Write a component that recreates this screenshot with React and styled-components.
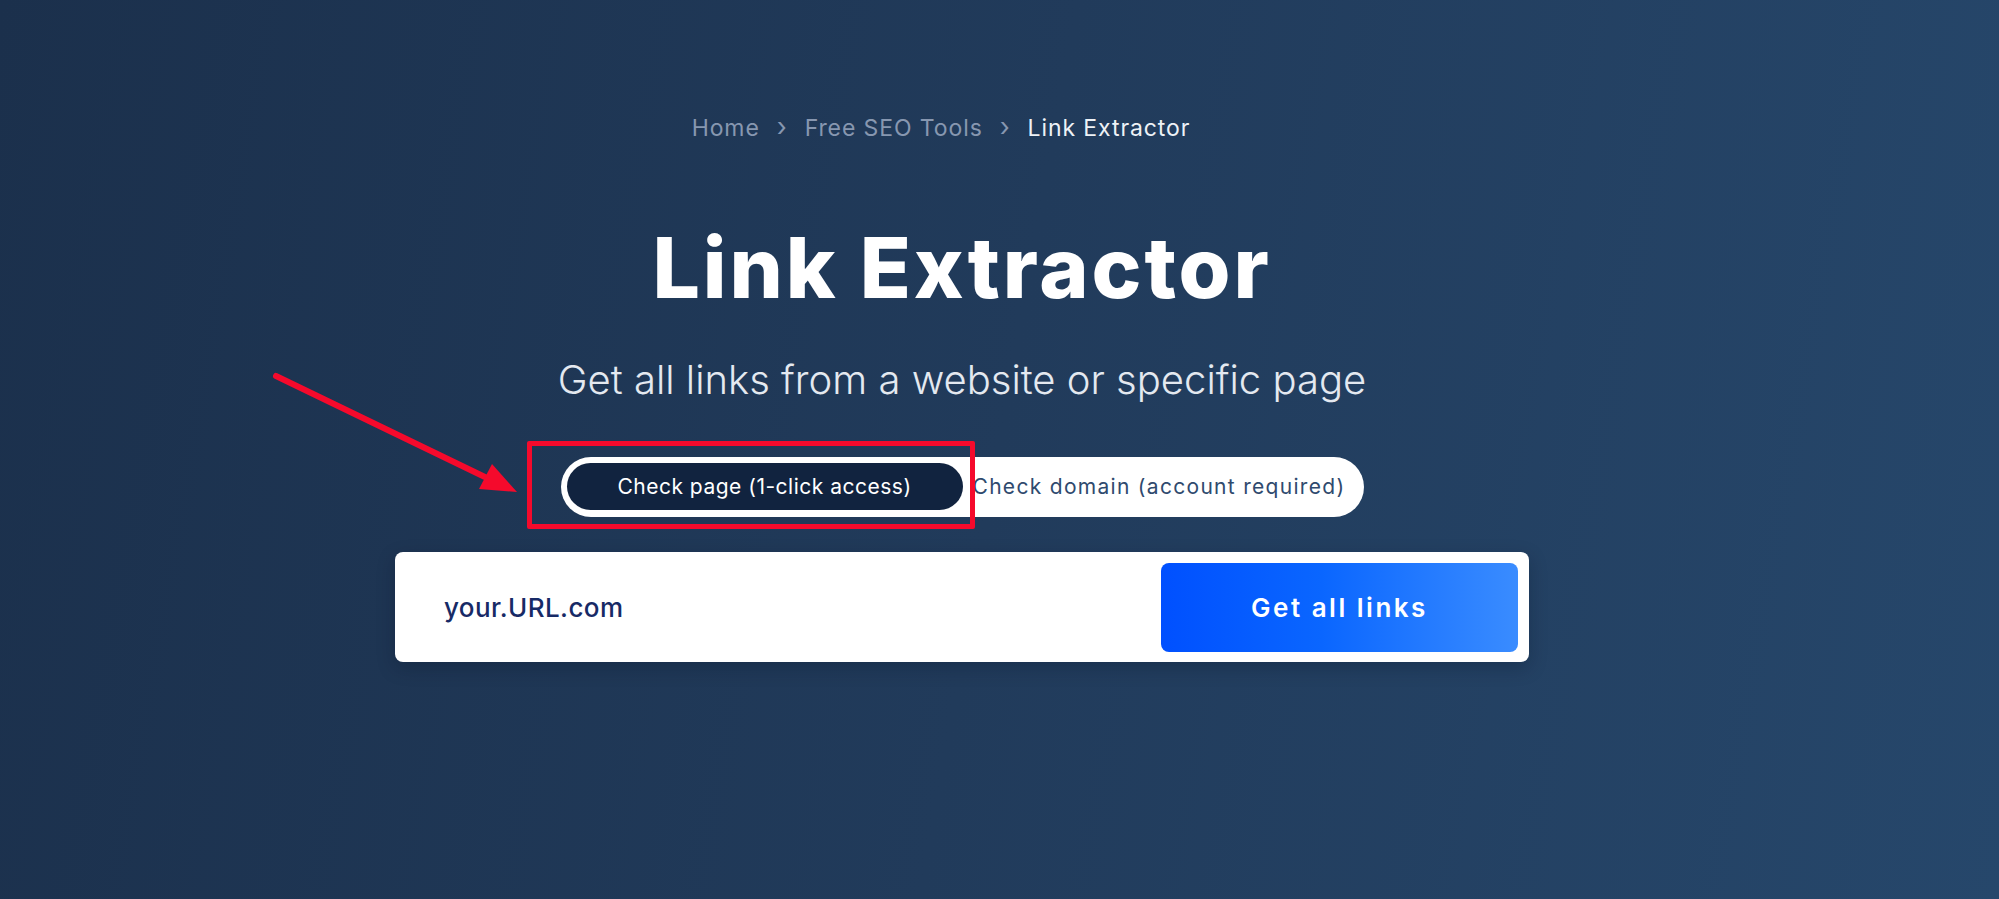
import React from 'react';
import styled, { createGlobalStyle } from 'styled-components';

const GlobalStyle = createGlobalStyle`
  html, body {
    margin: 0;
    padding: 0;
  }
  body {
    font-family: Inter, 'Noto Sans', sans-serif;
  }
`;

export default function App() {
  return (
    <>
      <GlobalStyle />
      <Page>
        <Content>
          <Breadcrumbs>
            <Crumb>Home</Crumb>
            <Chevron>›</Chevron>
            <Crumb>Free SEO Tools</Crumb>
            <Chevron>›</Chevron>
            <Crumb $current>Link Extractor</Crumb>
          </Breadcrumbs>

          <Title>Link Extractor</Title>
          <Subtitle>Get all links from a website or specific page</Subtitle>

          <ToggleWrap>
            <Arrow width='270' height='150' viewBox='0 0 270 150'>
              <line
                x1='15'
                y1='19'
                x2='226'
                y2='121'
                stroke='#f50a2c'
                strokeWidth='6'
                strokeLinecap='round'
              />
              <polygon points='256,135 218,132 231,107' fill='#f50a2c' />
            </Arrow>
            <Highlight />
            <Toggle>
              <ToggleOption type='button' $active>
                Check page (1-click access)
              </ToggleOption>
              <ToggleOption type='button'>
                Check domain (account required)
              </ToggleOption>
            </Toggle>
          </ToggleWrap>

          <SearchCard>
            <UrlInput placeholder='your.URL.com' />
            <SubmitButton type='button'>Get all links</SubmitButton>
          </SearchCard>
        </Content>
      </Page>
    </>
  );
}

const Page = styled.div`
  min-height: 899px;
  box-sizing: border-box;
  padding: 113px 75px 0 0;
  background: linear-gradient(100deg, #1b304c 0%, #213b5b 50%, #26476b 100%);
`;

const Content = styled.div`
  display: flex;
  flex-direction: column;
  align-items: center;
`;

const Breadcrumbs = styled.nav`
  display: flex;
  align-items: center;
  gap: 17px;
  height: 30px;
  margin-right: 42px;
  font-size: 23px;
  font-weight: 400;
  letter-spacing: 0.9px;
`;

const Crumb = styled.span`
  color: ${(p) => (p.$current ? '#eef2f7' : '#8797b0')};
`;

const Chevron = styled.span`
  color: #8797b0;
  font-size: 26px;
  line-height: 30px;
  margin-top: -3px;
`;

const Title = styled.h1`
  margin: 83px 0 0;
  font-size: 84px;
  line-height: 1;
  font-weight: 800;
  color: #ffffff;
  letter-spacing: 2.9px;
`;

const Subtitle = styled.p`
  margin: 50px 0 0;
  font-size: 40px;
  line-height: 1;
  font-weight: 300;
  color: #e4e9f0;
`;

const ToggleWrap = styled.div`
  position: relative;
  margin-top: 57px;
`;

const Toggle = styled.div`
  display: flex;
  align-items: center;
  width: 803px;
  height: 60px;
  box-sizing: border-box;
  padding: 6px 18px 7px 6px;
  background: #ffffff;
  border-radius: 30px;
`;

const ToggleOption = styled.button`
  height: 47px;
  border: none;
  border-radius: 24px;
  font-family: Inter, 'Noto Sans', sans-serif;
  font-size: 21px;
  cursor: pointer;
  white-space: nowrap;
  background: ${(p) => (p.$active ? '#11233f' : 'transparent')};
  color: ${(p) => (p.$active ? '#ffffff' : '#2f4a6e')};
  letter-spacing: ${(p) => (p.$active ? '0.5px' : '1.3px')};
  width: ${(p) => (p.$active ? '396px' : 'auto')};
  padding: ${(p) => (p.$active ? '0' : '0 0 0 10px')};
  flex: ${(p) => (p.$active ? '0 0 auto' : '1')};
  text-align: ${(p) => (p.$active ? 'center' : 'left')};
`;

const Highlight = styled.div`
  position: absolute;
  left: -34px;
  top: -16px;
  width: 448px;
  height: 88px;
  box-sizing: border-box;
  border: 5px solid #f50a2c;
  border-radius: 2px;
  pointer-events: none;
  z-index: 2;
`;

const Arrow = styled.svg`
  position: absolute;
  left: -300px;
  top: -100px;
  overflow: visible;
  pointer-events: none;
`;

const SearchCard = styled.div`
  display: flex;
  align-items: stretch;
  width: 1134px;
  height: 110px;
  box-sizing: border-box;
  margin-top: 35px;
  padding: 11px 11px 10px 0;
  background: #ffffff;
  border-radius: 8px;
  box-shadow: 0 6px 18px rgba(5, 15, 35, 0.25);
`;

const UrlInput = styled.input`
  flex: 1;
  min-width: 0;
  border: none;
  outline: none;
  background: transparent;
  padding: 0 0 0 49px;
  font-family: Inter, 'Noto Sans', sans-serif;
  font-size: 26px;
  font-weight: 500;
  letter-spacing: 0.4px;
  color: #172a66;

  &::placeholder {
    color: #172a66;
    opacity: 1;
  }
`;

const SubmitButton = styled.button`
  width: 357px;
  border: none;
  border-radius: 8px;
  background: linear-gradient(90deg, #0050ff 0%, #0a66ff 45%, #3a8cff 100%);
  color: #ffffff;
  font-family: Inter, 'Noto Sans', sans-serif;
  font-size: 26px;
  font-weight: 600;
  letter-spacing: 2.5px;
  cursor: pointer;
`;
